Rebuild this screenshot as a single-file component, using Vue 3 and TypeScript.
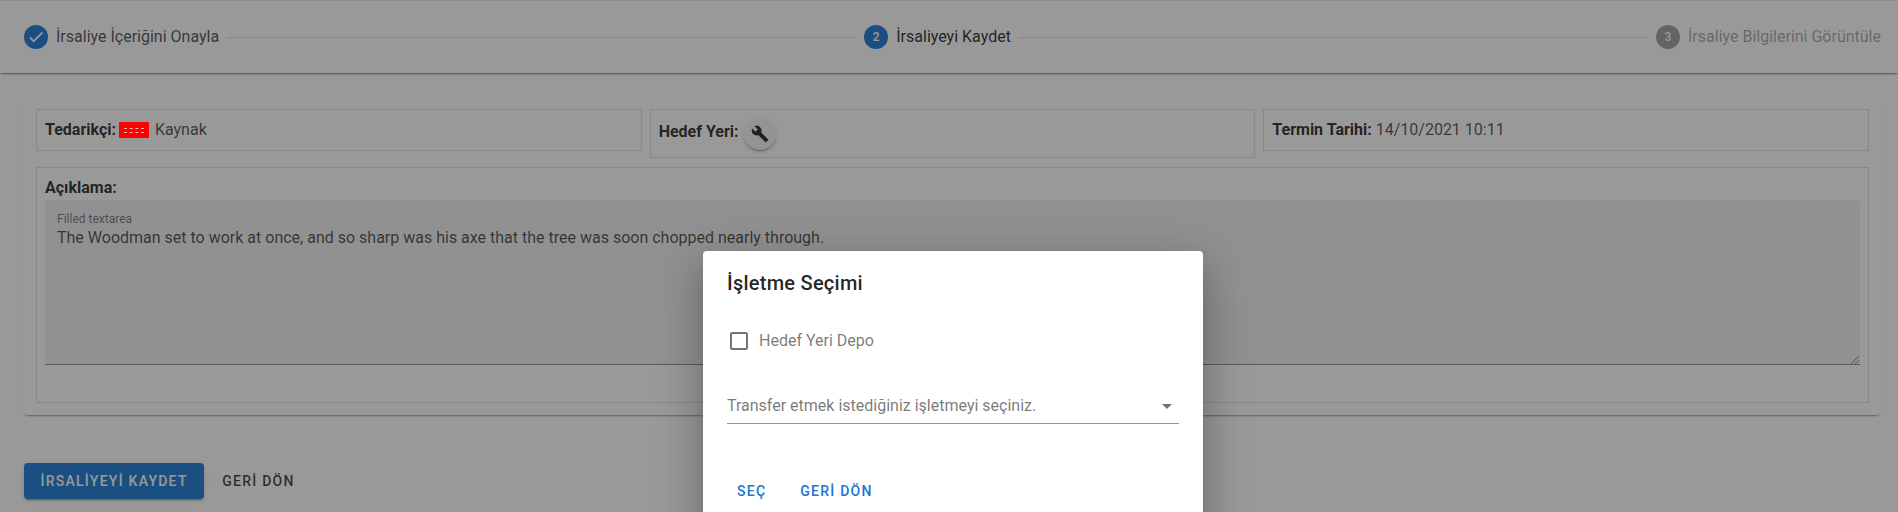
<script setup lang="ts">
interface Step { label: string; state: 'done' | 'active' | 'todo'; n: number }
const steps: Step[] = [
  { label: 'İrsaliye İçeriğini Onayla', state: 'done', n: 1 },
  { label: 'İrsaliyeyi Kaydet', state: 'active', n: 2 },
  { label: 'İrsaliye Bilgilerini Görüntüle', state: 'todo', n: 3 },
]
</script>

<template>
  <div class="page">
    <header class="stepper">
      <template v-for="(s, i) in steps" :key="s.n">
        <div class="step" :class="s.state">
          <span class="step-icon">
            <svg v-if="s.state === 'done'" viewBox="0 0 24 24" width="18" height="18"><path fill="#fff" stroke="#fff" stroke-width=".6" d="M21,7L9,19L3.5,13.5L4.91,12.09L9,16.17L19.59,5.59L21,7Z" /></svg>
            <template v-else>{{ s.n }}</template>
          </span>
          <span class="step-label">{{ s.label }}</span>
        </div>
        <div v-if="i < steps.length - 1" class="divider"></div>
      </template>
    </header>

    <main class="card">
      <div class="row">
        <div class="box"><b>Tedarikçi:</b> <span class="redact"><i></i><i></i></span> Kaynak</div>
        <div class="box target">
          <b>Hedef Yeri:</b>
          <button class="fab" type="button">
            <svg viewBox="0 0 24 24" width="18" height="18"><path fill="rgba(0,0,0,.87)" d="M22.7,19L13.6,9.9C14.5,7.6 14,4.9 12.1,3C10.1,1 7.1,0.6 4.7,1.7L9,6L6,9L1.6,4.7C0.4,7.1 0.9,10.1 2.9,12.1C4.8,14 7.5,14.5 9.8,13.6L18.9,22.7C19.3,23.1 19.9,23.1 20.3,22.7L22.6,20.4C23.1,20 23.1,19.3 22.7,19Z" /></svg>
          </button>
        </div>
        <div class="box"><b>Termin Tarihi:</b> 14/10/2021 10:11</div>
      </div>
      <div class="box note">
        <b>Açıklama:</b>
        <div class="filled">
          <span class="filled-label">Filled textarea</span>
          <span class="filled-text">The Woodman set to work at once, and so sharp was his axe that the tree was soon chopped nearly through.</span>
          <svg class="grip" viewBox="0 0 8 8" width="8" height="8"><path d="M8 0 0 8M8 4 4 8" stroke="rgba(0,0,0,.7)" stroke-width="1" stroke-dasharray="1 .5" fill="none" /></svg>
        </div>
      </div>
    </main>

    <div class="actions">
      <button class="btn primary" type="button">İRSALİYEYİ KAYDET</button>
      <button class="btn text" type="button">GERİ DÖN</button>
    </div>

    <div class="overlay"></div>

    <section class="dialog">
      <h2 class="dialog-title">İşletme Seçimi</h2>
      <label class="check">
        <svg viewBox="0 0 24 24" width="24" height="24"><path fill="rgba(0,0,0,.54)" d="M19,3H5C3.89,3 3,3.89 3,5V19A2,2 0 0,0 5,21H19A2,2 0 0,0 21,19V5C21,3.89 20.1,3 19,3M19,5V19H5V5H19Z" /></svg>
        <span>Hedef Yeri Depo</span>
      </label>
      <div class="select">
        <span>Transfer etmek istediğiniz işletmeyi seçiniz.</span>
        <svg viewBox="0 0 24 24" width="24" height="24"><path fill="rgba(0,0,0,.54)" d="M7,10L12,15L17,10H7Z" /></svg>
      </div>
      <div class="dialog-actions">
        <button class="btn link" type="button">SEÇ</button>
        <button class="btn link" type="button">GERİ DÖN</button>
      </div>
    </section>
  </div>
</template>

<style>
html, body { margin: 0; background: #fff; }
</style>

<style scoped>
.page {
  position: relative;
  height: 512px;
  overflow: hidden;
  font-family: Roboto, "Liberation Sans", sans-serif;
  font-size: 16px;
  line-height: 24px;
  color: rgba(0, 0, 0, .72);
  background: #fff;
}
.stepper {
  height: 73px;
  display: flex;
  align-items: center;
  padding: 0 17px 0 24px;
  box-sizing: border-box;
  border-top: 1px solid rgba(0, 0, 0, .1);
  box-shadow: 0 2px 2px -1px rgba(0,0,0,.4), 0 1px 1px 0 rgba(0,0,0,.14);
}
.step { display: flex; align-items: center; gap: 8px; }
.step-icon {
  width: 24px;
  height: 24px;
  border-radius: 50%;
  background: #1976d2;
  color: #fff;
  font-size: 12px;
  font-weight: 500;
  display: flex;
  align-items: center;
  justify-content: center;
}
.step.todo .step-icon { background: rgba(0, 0, 0, .38); }
.step.todo .step-label { color: rgba(0, 0, 0, .38); }
.step.active .step-label { color: rgba(0, 0, 0, .87); }
.divider { flex: 1; height: 1px; margin: 0 8px; background: rgba(0, 0, 0, .12); }
.card {
  margin: 25px 18px 0 24px;
  padding: 11px 11px 13px 12px;
  height: 317px;
  box-sizing: border-box;
  border-radius: 4px;
  box-shadow: 0 2px 2px -1px rgba(0,0,0,.42);
}
.row {
  display: grid;
  grid-template-columns: repeat(3, 1fr);
  gap: 8px;
  align-items: start;
}
.box { border: 1px solid rgba(0, 0, 0, .12); padding: 8px; }
.box b { font-weight: 700; color: rgba(0, 0, 0, .87); }
.target { display: flex; align-items: flex-start; gap: 5px; padding-bottom: 7px; }
.target b { margin-top: 2px; }
.redact {
  position: relative;
  z-index: 10;
  display: inline-flex;
  flex-direction: column;
  justify-content: center;
  gap: 3px;
  width: 30px;
  height: 16px;
  margin: 4px 2px 0 -1px;
  padding: 0 5px;
  box-sizing: border-box;
  background: #f00;
  border-radius: 1px;
  vertical-align: top;
}
.redact i { display: block; border-top: 1px dashed rgba(255, 255, 255, .7); }
.fab {
  width: 32px;
  height: 32px;
  padding: 0;
  border: 0;
  border-radius: 50%;
  background: #f5f5f5;
  display: flex;
  align-items: center;
  justify-content: center;
  box-shadow: 0 3px 1px -2px rgba(0,0,0,.2), 0 2px 2px 0 rgba(0,0,0,.14), 0 1px 5px 0 rgba(0,0,0,.12);
}
.note { margin-top: 9px; height: 236px; box-sizing: border-box; }
.filled {
  position: relative;
  height: 165px;
  box-sizing: border-box;
  padding: 12px 12px 0;
  background: rgba(0, 0, 0, .06);
  border-radius: 4px 4px 0 0;
  border-bottom: 1px solid rgba(0, 0, 0, .42);
  display: flex;
  flex-direction: column;
}
.filled-label { font-size: 12px; line-height: 14px; color: rgba(0, 0, 0, .55); }
.filled-text { line-height: 24px; }
.grip { position: absolute; right: 1px; bottom: 0; }
.actions { display: flex; align-items: center; gap: 2px; margin: 48px 24px 0; }
.btn {
  height: 36px;
  padding: 0 16px;
  border: 0;
  border-radius: 4px;
  background: none;
  font: 500 14px Roboto, "Liberation Sans", sans-serif;
  letter-spacing: 1.25px;
  color: rgba(0, 0, 0, .8);
}
.btn.primary {
  padding: 0 16.5px;
  background: #1976d2;
  color: #fff;
  box-shadow: 0 3px 1px -2px rgba(0,0,0,.2), 0 2px 2px 0 rgba(0,0,0,.14), 0 1px 5px 0 rgba(0,0,0,.12);
}
.overlay { position: absolute; inset: 0; background: rgba(33, 33, 33, .46); z-index: 5; }
.dialog {
  position: absolute;
  z-index: 6;
  left: 703px;
  top: 251px;
  width: 500px;
  height: 320px;
  padding: 16px 24px;
  box-sizing: border-box;
  background: #fff;
  border-radius: 4px;
  box-shadow: 0 11px 15px -7px rgba(0,0,0,.2), 0 24px 38px 3px rgba(0,0,0,.14), 0 9px 46px 8px rgba(0,0,0,.12);
}
.dialog-title {
  margin: 0;
  font-size: 20px;
  line-height: 32px;
  font-weight: 500;
  letter-spacing: .25px;
  color: rgba(0, 0, 0, .87);
}
.check {
  display: flex;
  align-items: center;
  gap: 8px;
  margin-top: 30px;
  color: rgba(0, 0, 0, .54);
}
.select {
  display: flex;
  align-items: center;
  justify-content: space-between;
  margin-top: 39px;
  height: 32px;
  box-sizing: border-box;
  padding: 0 0 3px 0;
  border-bottom: 1px solid rgba(0, 0, 0, .42);
  color: rgba(0, 0, 0, .54);
}
.dialog-actions { display: flex; gap: 2px; margin: 49px -6px 0; }
.btn.link { color: #1976d2; }
</style>
